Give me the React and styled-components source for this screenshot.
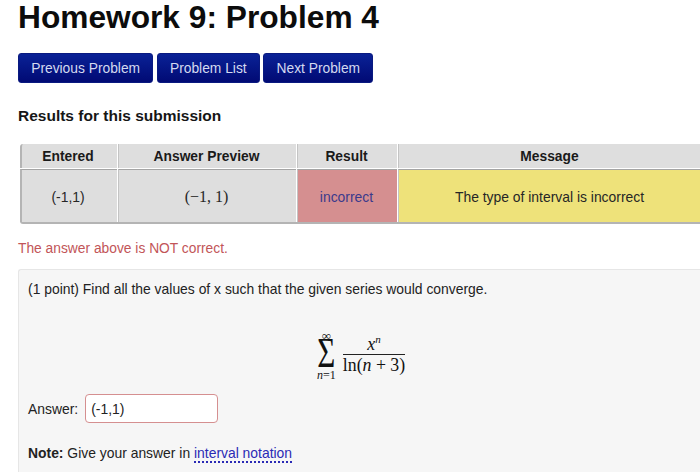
import styled, { createGlobalStyle } from "styled-components";

const GlobalStyle = createGlobalStyle`
  html, body {
    margin: 0;
    padding: 0;
    background: #fff;
    overflow: hidden;
  }
`;

const problemButtons = ["Previous Problem", "Problem List", "Next Problem"];

export default function App() {
  return (
    <Page>
      <GlobalStyle />
      <Title>Homework 9: Problem 4</Title>
      <ButtonRow>
        {problemButtons.map((label) => (
          <NavButton key={label}>{label}</NavButton>
        ))}
      </ButtonRow>
      <SectionHeading>Results for this submission</SectionHeading>
      <ResultsTable>
        <HeaderCell>Entered</HeaderCell>
        <HeaderCell>Answer Preview</HeaderCell>
        <HeaderCell>Result</HeaderCell>
        <HeaderCell>Message</HeaderCell>
        <BodyCell>(-1,1)</BodyCell>
        <BodyCell $serif>(−1, 1)</BodyCell>
        <BodyCell $bg="#d58f90" $color="#3b3a8c">incorrect</BodyCell>
        <BodyCell $bg="#eee27a">The type of interval is incorrect</BodyCell>
      </ResultsTable>
      <ErrorText>The answer above is NOT correct.</ErrorText>
      <ProblemBox>
        <ProblemText>(1 point) Find all the values of x such that the given series would converge.</ProblemText>
        <Equation>
          <Sigma>
            <Infinity>∞</Infinity>
            <SigmaGlyph>Σ</SigmaGlyph>
            <LowerLimit><i>n</i>=1</LowerLimit>
          </Sigma>
          <Fraction>
            <Numerator><i>x<sup>n</sup></i></Numerator>
            <Denominator>ln(<i>n</i> + 3)</Denominator>
          </Fraction>
        </Equation>
        <AnswerRow>
          <span>Answer:</span>
          <AnswerInput readOnly value="(-1,1)" />
        </AnswerRow>
        <Note>
          <strong>Note:</strong> Give your answer in <HelpLink href="#">interval notation</HelpLink>
        </Note>
      </ProblemBox>
    </Page>
  );
}

const Page = styled.div`
  width: 700px;
  height: 472px;
  overflow: hidden;
  padding-left: 18px;
  box-sizing: border-box;
  font-family: "Liberation Sans", Arial, sans-serif;
  color: #222;
`;

const Title = styled.h1`
  margin: 0;
  font-size: 31.7px;
  line-height: 35px;
  font-weight: 700;
  color: #0c0c0c;
`;

const ButtonRow = styled.div`
  display: flex;
  gap: 3.5px;
  margin-top: 18px;
`;

const NavButton = styled.button`
  height: 30px;
  padding: 0 12.2px;
  border: 1px solid #0a1a80;
  border-radius: 3px;
  background: linear-gradient(#0a2296, #010a74);
  color: #d4daf0;
  font-family: inherit;
  font-size: 13.8px;
`;

const SectionHeading = styled.h2`
  margin: 23px 0 0;
  font-size: 15.5px;
  line-height: 20px;
  font-weight: 700;
  color: #161616;
`;

const ResultsTable = styled.div`
  display: grid;
  grid-template-columns: 97px 178px 100px 304px;
  grid-template-rows: 24px 53px;
  gap: 1px;
  width: 682px;
  margin: 18px 0 0 2px;
  background: #fff;
  border-bottom: 2px solid #b4b4b4;
  border-radius: 3px;
`;

const HeaderCell = styled.div`
  display: flex;
  align-items: center;
  justify-content: center;
  padding-right: 2px;
  background: #dedede;
  border-left: 1px solid #c4c4c4;
  font-size: 13.8px;
  font-weight: 700;
  color: #1a1a1a;

  &:first-child {
    padding-right: 3px;
    border-left: 2px solid #b4b4b4;
    border-top-left-radius: 3px;
  }
`;

const BodyCell = styled.div`
  display: flex;
  align-items: center;
  justify-content: center;
  padding: 2px 2px 0 0;
  background: ${(props) => props.$bg || "#dedede"};
  border-left: 1px solid #c4c4c4;
  border-top: 1px solid #a4a4a4;
  color: ${(props) => props.$color || "#262626"};
  font-family: ${(props) => (props.$serif ? '"Liberation Serif", serif' : "inherit")};
  font-size: ${(props) => (props.$serif ? "16px" : "13.9px")};

  &:nth-child(5) {
    padding-right: 3px;
    border-left: 2px solid #b4b4b4;
  }
`;

const ErrorText = styled.p`
  margin: 16px 0 0;
  font-size: 13.8px;
  line-height: 18px;
  color: #c25558;
`;

const ProblemBox = styled.div`
  margin-top: 11px;
  height: 220px;
  padding: 10px 9px 0;
  background: #f6f6f6;
  border-top: 1px solid #e6e6e6;
  border-left: 1px solid #e6e6e6;
  border-top-left-radius: 3px;
  font-size: 13.9px;
`;

const ProblemText = styled.p`
  margin: 0;
  line-height: 18px;
  color: #222;
`;

const Equation = styled.div`
  display: flex;
  justify-content: center;
  align-items: center;
  gap: 7px;
  margin-top: 35px;
  padding-left: 3px;
  font-family: "Liberation Serif", serif;
  color: #111;
`;

const Sigma = styled.div`
  display: flex;
  flex-direction: column;
  align-items: center;
  width: 19px;
`;

const Infinity = styled.span`
  font-size: 13px;
  line-height: 6px;
  height: 6px;
`;

const SigmaGlyph = styled.span`
  font-size: 31px;
  line-height: 28px;
  height: 28px;
  margin-bottom: 4px;
  transform: scaleY(1.35);
`;

const LowerLimit = styled.span`
  font-size: 12px;
  line-height: 8px;
  height: 8px;
  white-space: nowrap;
`;

const Fraction = styled.div`
  display: flex;
  flex-direction: column;
  align-items: center;
  margin-bottom: 2px;
  font-size: 17.8px;
`;

const Numerator = styled.div`
  line-height: 19px;
  height: 19px;

  sup {
    font-size: 11px;
    line-height: 0;
  }
`;

const Denominator = styled.div`
  border-top: 1px solid #222;
  line-height: 21px;
`;

const AnswerRow = styled.div`
  display: flex;
  align-items: center;
  gap: 7px;
  margin-top: 15px;
`;

const AnswerInput = styled.input`
  width: 133px;
  height: 29px;
  box-sizing: border-box;
  padding: 0 5px;
  background: #fff;
  border: 1px solid #d58f90;
  border-radius: 4px;
  font-family: inherit;
  font-size: 13.9px;
  color: #222;
`;

const Note = styled.p`
  margin: 21px 0 0;
  line-height: 18px;
`;

const HelpLink = styled.a`
  color: #2a2ab5;
  text-decoration: none;
  border-bottom: 2px dotted #2a2ab5;
`;
